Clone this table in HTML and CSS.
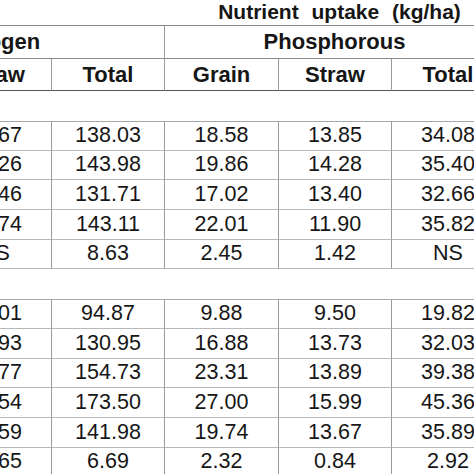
FILE: index.html
```html
<!DOCTYPE html>
<html lang="en">
<head>
    <meta charset="UTF-8">
    <meta name="viewport" content="width=device-width, initial-scale=1.0">
    <title>Nutrient uptake</title>
    <link rel="stylesheet" href="styles.css">
</head>
<body>
    <div class="frame">
        <table class="uptake">
            <colgroup>
                <col class="c113"><col class="c113"><col class="c113">
                <col class="c114"><col class="c113"><col class="c113">
            </colgroup>
            <thead>
                <tr class="title-row">
                    <th colspan="6" class="title">Nutrient uptake (kg/ha)</th>
                </tr>
                <tr class="group-row">
                    <th colspan="3" class="sep">Nitrogen</th>
                    <th colspan="3" class="sep">Phosphorous</th>
                </tr>
                <tr class="sub-row">
                    <th class="sep">Grain</th>
                    <th class="sep">Straw</th>
                    <th class="sep">Total</th>
                    <th class="sep">Grain</th>
                    <th class="sep">Straw</th>
                    <th class="sep">Total</th>
                </tr>
            </thead>
            <tbody>
                <tr class="blank"><td colspan="6"></td></tr>
                <tr class="h29"><td></td><td>38.67</td><td>138.03</td><td>18.58</td><td>13.85</td><td>34.08</td></tr>
                <tr class="h29"><td></td><td>42.26</td><td>143.98</td><td>19.86</td><td>14.28</td><td>35.40</td></tr>
                <tr class="h30"><td></td><td>37.46</td><td>131.71</td><td>17.02</td><td>13.40</td><td>32.66</td></tr>
                <tr class="h30"><td></td><td>40.74</td><td>143.11</td><td>22.01</td><td>11.90</td><td>35.82</td></tr>
                <tr class="h29"><td></td><td>NS</td><td>8.63</td><td>2.45</td><td>1.42</td><td>NS</td></tr>
                <tr class="blank"><td colspan="6"></td></tr>
                <tr class="h29"><td></td><td>30.01</td><td>94.87</td><td>9.88</td><td>9.50</td><td>19.82</td></tr>
                <tr class="h30"><td></td><td>37.93</td><td>130.95</td><td>16.88</td><td>13.73</td><td>32.03</td></tr>
                <tr class="h29"><td></td><td>43.77</td><td>154.73</td><td>23.31</td><td>13.89</td><td>39.38</td></tr>
                <tr class="h30"><td></td><td>48.54</td><td>173.50</td><td>27.00</td><td>15.99</td><td>45.36</td></tr>
                <tr class="h30"><td></td><td>40.59</td><td>141.98</td><td>19.74</td><td>13.67</td><td>35.89</td></tr>
                <tr class="h29"><td></td><td>10.65</td><td>6.69</td><td>2.32</td><td>0.84</td><td>2.92</td></tr>
            </tbody>
        </table>
    </div>
</body>
</html>
```

FILE: styles.css
```css
body {
    margin: 0;
    padding: 0;
    background-color: #fff;
    font-family: "Liberation Sans", Arial, sans-serif;
    color: #161616;
}

.frame {
    width: 474px;
    height: 474px;
    overflow: hidden;
}

.uptake {
    margin-left: -175px;
    width: 679px;
    table-layout: fixed;
    border-collapse: separate;
    border-spacing: 0;
    font-size: 21.5px;
}

.c113 {
    width: 113px;
}

.c114 {
    width: 114px;
}

.uptake th, .uptake td {
    box-sizing: border-box;
    padding: 0;
    text-align: center;
    vertical-align: middle;
    line-height: 1;
    white-space: nowrap;
}

.uptake td {
    border-left: 1px solid #9a9a9a;
    border-bottom: 1px solid #b8b8b8;
}

.uptake th {
    font-weight: bold;
    font-size: 22px;
}

.sep {
    border-left: 1px solid #9a9a9a;
}

.uptake .title-row th {
    height: 26px;
    border-bottom: 1px solid #888;
    padding-left: 350px;
    vertical-align: top;
    font-size: 21px;
    line-height: 23px;
    word-spacing: 7px;
}

.group-row th {
    height: 33px;
    border-bottom: 1px solid #8c8c8c;
}

.sub-row th {
    height: 32px;
    border-bottom: 1px solid #555;
}

.uptake tr.blank td {
    height: 31px;
    border-left: none;
    border-bottom: 1px solid #a8a8a8;
}

.h29 td {
    height: 29px;
}

.h30 td {
    height: 30px;
}
```
